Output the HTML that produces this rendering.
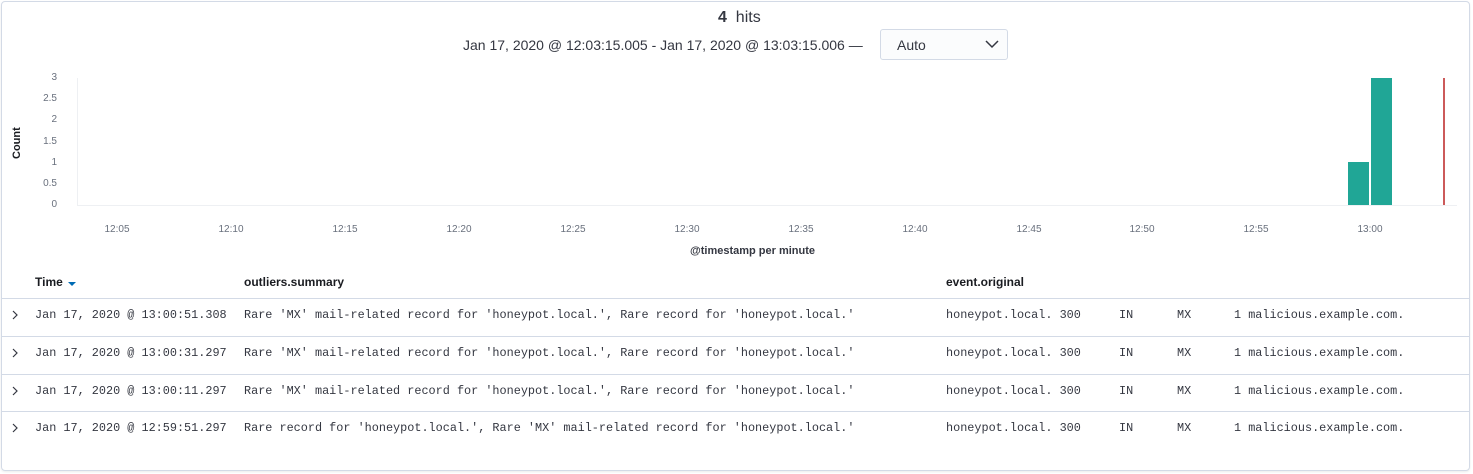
<!DOCTYPE html>
<html><head><style>
body{margin:0;width:1473px;height:474px;background:#fff;font-family:"Liberation Sans",sans-serif;position:relative;overflow:hidden}
.panel{position:absolute;left:1px;top:1px;width:1467px;height:468px;border:1px solid #d3dae6;border-radius:4px;box-shadow:0 1px 2px rgba(0,0,0,.08)}
.a{position:absolute;white-space:pre}
.yl{font-size:10px;color:#69707d;text-align:right;width:20px;left:37px}
.xl{font-size:10px;color:#69707d;transform:translateX(-50%)}
.m{font-family:"Liberation Mono",monospace;font-size:11.83px;color:#343741}
.h{font-size:12px;font-weight:bold;color:#1a1c21}
.sep{position:absolute;left:2px;width:1467px;height:1px;background:#d3dae6}
.chev{position:absolute;left:11px}
</style></head><body>
<div class="panel"></div>
<div class="a" style="left:718px;top:9px;font-size:16px;color:#343741"><b>4</b>  hits</div>
<div class="a" style="left:463px;top:37px;font-size:14px;color:#343741">Jan 17, 2020 @ 12:03:15.005 - Jan 17, 2020 @ 13:03:15.006 —</div>
<div class="a" style="left:880px;top:29px;width:128px;height:31px;border:1px solid #d3dae6;border-radius:3px;background:#fbfcfd;box-sizing:border-box"></div>
<div class="a" style="left:897px;top:37px;font-size:14px;color:#343741">Auto</div>
<svg class="a" style="left:985px;top:40px" width="14" height="9"><path d="M1 1l6 6 6-6" stroke="#343741" stroke-width="1.5" fill="none"/></svg>
<div class="a yl" style="top:72px">3</div>
<div class="a yl" style="top:93px">2.5</div>
<div class="a yl" style="top:114px">2</div>
<div class="a yl" style="top:136px">1.5</div>
<div class="a yl" style="top:157px">1</div>
<div class="a yl" style="top:178px">0.5</div>
<div class="a yl" style="top:199px">0</div>
<div class="a" style="left:11px;top:159px;font-size:11px;font-weight:bold;color:#1a1c21;transform:rotate(-90deg);transform-origin:left top">Count</div>
<div class="a" style="left:77px;top:78px;width:1px;height:128px;background:#eef0f3"></div>
<div class="a" style="left:77px;top:205px;width:1380px;height:1px;background:#eef0f3"></div>
<div class="a" style="left:1348px;top:162px;width:21px;height:43px;background:#20a696"></div>
<div class="a" style="left:1371px;top:78px;width:21px;height:127px;background:#20a696"></div>
<div class="a" style="left:1443px;top:78px;width:2px;height:127px;background:#cc5a5a"></div>
<div class="a xl" style="left:117px;top:224px">12:05</div>
<div class="a xl" style="left:231px;top:224px">12:10</div>
<div class="a xl" style="left:345px;top:224px">12:15</div>
<div class="a xl" style="left:459px;top:224px">12:20</div>
<div class="a xl" style="left:573px;top:224px">12:25</div>
<div class="a xl" style="left:687px;top:224px">12:30</div>
<div class="a xl" style="left:801px;top:224px">12:35</div>
<div class="a xl" style="left:915px;top:224px">12:40</div>
<div class="a xl" style="left:1029px;top:224px">12:45</div>
<div class="a xl" style="left:1142px;top:224px">12:50</div>
<div class="a xl" style="left:1256px;top:224px">12:55</div>
<div class="a xl" style="left:1370px;top:224px">13:00</div>
<div class="a" style="left:690px;top:245px;font-size:11px;font-weight:bold;color:#343741">@timestamp per minute</div>
<div class="a h" style="left:35px;top:275px">Time</div>
<svg class="a" style="left:68px;top:282px" width="8" height="5"><path d="M0 0h8L4 4z" fill="#006bb4"/></svg>
<div class="a h" style="left:244px;top:275px">outliers.summary</div>
<div class="a h" style="left:946px;top:275px">event.original</div>
<div class="sep" style="top:298px"></div>
<div class="sep" style="top:336px"></div>
<div class="sep" style="top:374px"></div>
<div class="sep" style="top:411px"></div>

<svg class="chev" style="top:310px" width="8" height="10"><path d="M2 1l4 4-4 4" stroke="#343741" stroke-width="1.2" fill="none"/></svg>
<div class="a m" style="left:35px;top:308px">Jan 17, 2020 @ 13:00:51.308</div>
<div class="a m" style="left:244px;top:308px">Rare 'MX' mail-related record for 'honeypot.local.', Rare record for 'honeypot.local.'</div>
<div class="a m" style="left:946px;top:308px">honeypot.local. 300</div><div class="a m" style="left:1119px;top:308px">IN</div><div class="a m" style="left:1177px;top:308px">MX</div><div class="a m" style="left:1234px;top:308px">1 malicious.example.com.</div>

<svg class="chev" style="top:348px" width="8" height="10"><path d="M2 1l4 4-4 4" stroke="#343741" stroke-width="1.2" fill="none"/></svg>
<div class="a m" style="left:35px;top:346px">Jan 17, 2020 @ 13:00:31.297</div>
<div class="a m" style="left:244px;top:346px">Rare 'MX' mail-related record for 'honeypot.local.', Rare record for 'honeypot.local.'</div>
<div class="a m" style="left:946px;top:346px">honeypot.local. 300</div><div class="a m" style="left:1119px;top:346px">IN</div><div class="a m" style="left:1177px;top:346px">MX</div><div class="a m" style="left:1234px;top:346px">1 malicious.example.com.</div>

<svg class="chev" style="top:386px" width="8" height="10"><path d="M2 1l4 4-4 4" stroke="#343741" stroke-width="1.2" fill="none"/></svg>
<div class="a m" style="left:35px;top:384px">Jan 17, 2020 @ 13:00:11.297</div>
<div class="a m" style="left:244px;top:384px">Rare 'MX' mail-related record for 'honeypot.local.', Rare record for 'honeypot.local.'</div>
<div class="a m" style="left:946px;top:384px">honeypot.local. 300</div><div class="a m" style="left:1119px;top:384px">IN</div><div class="a m" style="left:1177px;top:384px">MX</div><div class="a m" style="left:1234px;top:384px">1 malicious.example.com.</div>

<svg class="chev" style="top:423px" width="8" height="10"><path d="M2 1l4 4-4 4" stroke="#343741" stroke-width="1.2" fill="none"/></svg>
<div class="a m" style="left:35px;top:421px">Jan 17, 2020 @ 12:59:51.297</div>
<div class="a m" style="left:244px;top:421px">Rare record for 'honeypot.local.', Rare 'MX' mail-related record for 'honeypot.local.'</div>
<div class="a m" style="left:946px;top:421px">honeypot.local. 300</div><div class="a m" style="left:1119px;top:421px">IN</div><div class="a m" style="left:1177px;top:421px">MX</div><div class="a m" style="left:1234px;top:421px">1 malicious.example.com.</div>
</body></html>
